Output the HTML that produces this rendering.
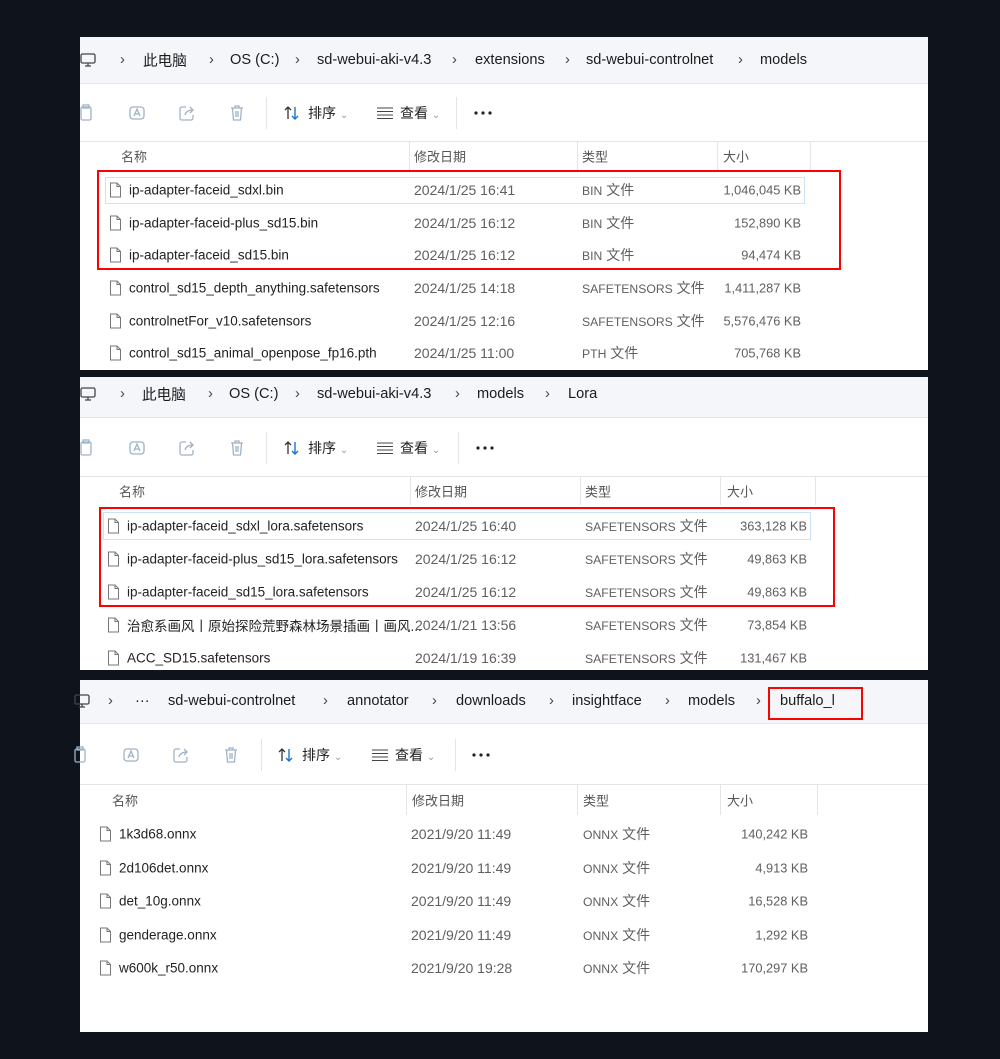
<!DOCTYPE html><html><head><meta charset="utf-8"><style>
*{margin:0;padding:0;box-sizing:border-box}
body{width:1000px;height:1059px;background:#0f131c;position:relative;overflow:hidden;font-family:"Liberation Sans","Noto Sans CJK SC",sans-serif;color:#1b1b1b}
.p{position:absolute;left:80px;width:848px;background:#fff;overflow:hidden}
.a{position:absolute;left:0;right:0;top:0;background:#f4f6f9;border-bottom:1px solid #e3e6ea}
.t{position:absolute;white-space:nowrap;font-size:14.6px;transform:translateY(-50%)}
.s{font-size:14px;color:#222}
.g{color:#5f5f5f}
.h{color:#555;font-size:13px}
.dv{position:absolute;width:1px;background:#e5e5e5}
.red{position:absolute;border:2px solid #f00}
.ic{position:absolute;transform:translateY(-50%)}
</style></head><body>

<!-- Panel 1 -->
<div class="p" style="top:37px;height:333px">
<div class="a" style="height:47px"></div>
<div class="dv" style="left:186px;top:60px;height:32px"></div>
<div class="dv" style="left:376px;top:60px;height:32px"></div>
<div style="position:absolute;left:0;right:0;top:104px;border-top:1px solid #e5e5e5"></div>
<div class="dv" style="left:329px;top:105px;height:28px"></div><div class="dv" style="left:497px;top:105px;height:28px"></div><div class="dv" style="left:637px;top:105px;height:28px"></div><div class="dv" style="left:730px;top:105px;height:28px"></div>
<div class="t h" style="left:41px;top:119px">名称</div><div class="t h" style="left:334px;top:119px">修改日期</div><div class="t h" style="left:502px;top:119px">类型</div><div class="t h" style="left:643px;top:119px">大小</div>
<div style="position:absolute;left:25px;top:140px;width:700px;height:27px;border:1px solid #cde3f5;background:#fff"></div>
</div>

<!-- Panel 2 -->
<div class="p" style="top:377px;height:293px">
<div class="a" style="height:41px"></div>
<div class="dv" style="left:186px;top:55px;height:32px"></div>
<div class="dv" style="left:378px;top:55px;height:32px"></div>
<div style="position:absolute;left:0;right:0;top:99px;border-top:1px solid #e5e5e5"></div>
<div class="dv" style="left:330px;top:100px;height:28px"></div><div class="dv" style="left:500px;top:100px;height:28px"></div><div class="dv" style="left:640px;top:100px;height:28px"></div><div class="dv" style="left:735px;top:100px;height:28px"></div>
<div class="t h" style="left:39px;top:114px">名称</div><div class="t h" style="left:335px;top:114px">修改日期</div><div class="t h" style="left:505px;top:114px">类型</div><div class="t h" style="left:647px;top:114px">大小</div>
<div style="position:absolute;left:23px;top:135px;width:708px;height:28px;border:1px solid #cde3f5"></div>
</div>

<!-- Panel 3 -->
<div class="p" style="top:680px;height:352px">
<div class="a" style="height:44px"></div>
<div class="dv" style="left:181px;top:59px;height:32px"></div>
<div class="dv" style="left:375px;top:59px;height:32px"></div>
<div style="position:absolute;left:0;right:0;top:104px;border-top:1px solid #e5e5e5"></div>
<div class="dv" style="left:326px;top:105px;height:30px"></div><div class="dv" style="left:497px;top:105px;height:30px"></div><div class="dv" style="left:640px;top:105px;height:30px"></div><div class="dv" style="left:737px;top:105px;height:30px"></div>
<div class="t h" style="left:32px;top:120px">名称</div><div class="t h" style="left:332px;top:120px">修改日期</div><div class="t h" style="left:503px;top:120px">类型</div><div class="t h" style="left:647px;top:120px">大小</div>
</div>

<div id="rows"></div>
<script>
const P=[
 {n:129,d:414,ty:582,sz:801,rows:[[190,"ip-adapter-faceid_sdxl.bin","2024/1/25 16:41","BIN 文件","1,046,045 KB"],[223,"ip-adapter-faceid-plus_sd15.bin","2024/1/25 16:12","BIN 文件","152,890 KB"],[255,"ip-adapter-faceid_sd15.bin","2024/1/25 16:12","BIN 文件","94,474 KB"],[288,"control_sd15_depth_anything.safetensors","2024/1/25 14:18","SAFETENSORS 文件","1,411,287 KB"],[321,"controlnetFor_v10.safetensors","2024/1/25 12:16","SAFETENSORS 文件","5,576,476 KB"],[353,"control_sd15_animal_openpose_fp16.pth","2024/1/25 11:00","PTH 文件","705,768 KB"]]},
 {n:127,d:415,ty:585,sz:807,rows:[[526,"ip-adapter-faceid_sdxl_lora.safetensors","2024/1/25 16:40","SAFETENSORS 文件","363,128 KB"],[559,"ip-adapter-faceid-plus_sd15_lora.safetensors","2024/1/25 16:12","SAFETENSORS 文件","49,863 KB"],[592,"ip-adapter-faceid_sd15_lora.safetensors","2024/1/25 16:12","SAFETENSORS 文件","49,863 KB"],[625,"治愈系画风丨原始探险荒野森林场景插画丨画风...","2024/1/21 13:56","SAFETENSORS 文件","73,854 KB"],[658,"ACC_SD15.safetensors","2024/1/19 16:39","SAFETENSORS 文件","131,467 KB"]]},
 {n:119,d:411,ty:583,sz:808,rows:[[834,"1k3d68.onnx","2021/9/20 11:49","ONNX 文件","140,242 KB"],[868,"2d106det.onnx","2021/9/20 11:49","ONNX 文件","4,913 KB"],[901,"det_10g.onnx","2021/9/20 11:49","ONNX 文件","16,528 KB"],[935,"genderage.onnx","2021/9/20 11:49","ONNX 文件","1,292 KB"],[968,"w600k_r50.onnx","2021/9/20 19:28","ONNX 文件","170,297 KB"]]}];
const B=[
 {y:60,pc:88,items:[[120,"›"],[143,"此电脑"],[209,"›"],[230,"OS (C:)"],[295,"›"],[317,"sd-webui-aki-v4.3"],[452,"›"],[475,"extensions"],[565,"›"],[586,"sd-webui-controlnet"],[738,"›"],[760,"models"]]},
 {y:394,pc:88,items:[[120,"›"],[142,"此电脑"],[208,"›"],[229,"OS (C:)"],[295,"›"],[317,"sd-webui-aki-v4.3"],[455,"›"],[477,"models"],[545,"›"],[568,"Lora"]]},
 {y:701,pc:82,items:[[108,"›"],[135,"···"],[168,"sd-webui-controlnet"],[323,"›"],[347,"annotator"],[432,"›"],[456,"downloads"],[549,"›"],[572,"insightface"],[665,"›"],[688,"models"],[756,"›"],[780,"buffalo_l"]]}];
const T=[{y:113,x0:88,sort:283,view:376,more:474},{y:448,x0:88,sort:283,view:376,more:476},{y:755,x0:82,sort:277,view:371,more:472}];
let h="";
function mon(x,y){return `<svg class="ic" style="left:${x-8}px;top:${y}px" width="16" height="16" viewBox="0 0 16 16"><rect x="1" y="2" width="14" height="9" rx="1.5" fill="none" stroke="#444" stroke-width="1.3"/><path d="M5 14h6M8 11v3" stroke="#444" stroke-width="1.3"/></svg>`}
for(const b of B){h+=mon(b.pc,b.y);for(const it of b.items)h+=`<div class="t" style="left:${it[0]}px;top:${b.y}px;color:${it[1]=="›"?"#444":"#1b1b1b"}">${it[1]}</div>`;}
for(const t of T){const y=t.y,x=t.x0;
 const st='fill="none" stroke="#9fb3c8" stroke-width="1.3"';
 h+=`<svg class="ic" style="left:${x-10}px;top:${y}px" width="16" height="18" viewBox="0 0 16 18"><rect x="3" y="3" width="10" height="13" rx="1.5" ${st}/><rect x="5" y="1" width="6" height="3" ${st}/></svg>`;
 h+=`<svg class="ic" style="left:${x+40}px;top:${y}px" width="18" height="18" viewBox="0 0 18 18"><rect x="2" y="3" width="14" height="12" rx="3" ${st}/><path d="M6 12l3-7 3 7M7 10h4" ${st}/></svg>`;
 h+=`<svg class="ic" style="left:${x+90}px;top:${y}px" width="18" height="18" viewBox="0 0 18 18"><path d="M8 3H4a2 2 0 0 0-2 2v9a2 2 0 0 0 2 2h9a2 2 0 0 0 2-2v-3" ${st}/><path d="M7 11c1-4 4-5 8-5M12 3l3 3-3 3" ${st}/></svg>`;
 h+=`<svg class="ic" style="left:${x+140}px;top:${y}px" width="18" height="18" viewBox="0 0 18 18"><path d="M3 4h12M7 4V2h4v2M4.5 4l1 12h7l1-12M8 7v6M10 7v6" ${st}/></svg>`;
 h+=`<svg class="ic" style="left:${t.sort}px;top:${y}px" width="18" height="18" viewBox="0 0 18 18"><path d="M5 15V3M2 6l3-3 3 3" fill="none" stroke="#333" stroke-width="1.3"/><path d="M12 3v12M9 12l3 3 3-3" fill="none" stroke="#1a73d8" stroke-width="1.4"/></svg>`;
 h+=`<div class="t s" style="left:${t.sort+25}px;top:${y}px">排序 <span style="color:#999;font-size:10px">⌄</span></div>`;
 h+=`<svg class="ic" style="left:${t.view}px;top:${y}px" width="18" height="14" viewBox="0 0 18 14"><path d="M1 2h16M1 5.5h16M1 9h16M1 12.5h16" stroke="#444" stroke-width="1.1"/></svg>`;
 h+=`<div class="t s" style="left:${t.view+24}px;top:${y}px">查看 <span style="color:#999;font-size:10px">⌄</span></div>`;
 h+=`<svg class="ic" style="left:${t.more}px;top:${y}px" width="18" height="4" viewBox="0 0 18 4"><circle cx="2" cy="2" r="1.6" fill="#222"/><circle cx="9" cy="2" r="1.6" fill="#222"/><circle cx="16" cy="2" r="1.6" fill="#222"/></svg>`;
}
for(const p of P)for(const r of p.rows){
 const ty=r[3].replace(/^([A-Z]+) /,'<span style="font-size:12.2px">$1</span> ');
 h+=`<svg class="ic" style="left:${p.n-20}px;top:${r[0]}px" width="13" height="17" viewBox="0 0 13 17"><path d="M1.5 1.5h6.5l3.5 3.5v10.5h-10z M8 1.5v3.5h3.5" fill="#fff" stroke="#777" stroke-width="1"/></svg>`;
 h+=`<div class="t s" style="left:${p.n}px;top:${r[0]}px;font-size:13.5px">${r[1]}</div>`;
 h+=`<div class="t s g" style="left:${p.d}px;top:${r[0]}px">${r[2]}</div>`;
 h+=`<div class="t s g" style="left:${p.ty}px;top:${r[0]}px">${ty}</div>`;
 h+=`<div class="t s g" style="right:${1000-p.sz}px;top:${r[0]}px;font-size:12.8px">${r[4]}</div>`;
}
h+=`<div class="red" style="left:97px;top:170px;width:744px;height:100px"></div>`;
h+=`<div class="red" style="left:99px;top:507px;width:736px;height:100px"></div>`;
h+=`<div class="red" style="left:768px;top:687px;width:95px;height:33px"></div>`;
document.getElementById("rows").innerHTML=h;
</script>
</body></html>
